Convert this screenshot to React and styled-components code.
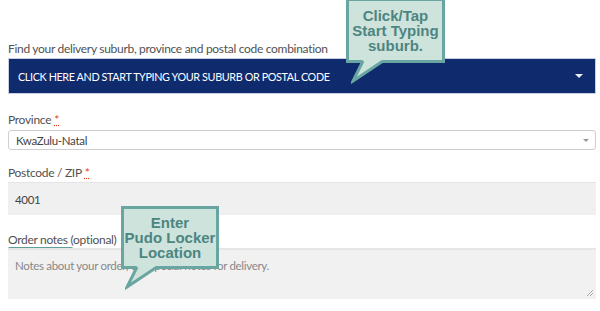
import React from 'react';
import styled, { createGlobalStyle } from 'styled-components';

const Global = createGlobalStyle`
  body {
    margin: 0;
    background: #fff;
    font-family: Lato, "Open Sans", sans-serif;
  }
`;

const Page = styled.div`
  position: relative;
  width: 600px;
  height: 311px;
  overflow: hidden;
  padding: 41px 4px 0 8px;
  box-sizing: border-box;
`;

const Field = styled.div`
  display: flex;
  flex-direction: column;
  margin-bottom: ${(p) => p.gap || 18}px;
`;

const Label = styled.label`
  font-size: 12px;
  letter-spacing: -0.3px;
  color: #515151;
  line-height: 15px;
  margin-bottom: ${(p) => p.mb || 4}px;
  position: relative;
  display: inline-block;
  align-self: flex-start;
`;

const Req = styled.span`
  color: #e2401c;
  text-decoration: underline dotted;
  margin-left: 3px;
`;

const Underline = styled.span`
  position: absolute;
  left: 0;
  bottom: -3px;
  width: 65px;
  height: 3px;
  background: #5e9f9c;
  border-radius: 2px;
`;

const SuburbBar = styled.div`
  height: 34px;
  background: #0f2b6e;
  display: flex;
  align-items: center;
  justify-content: space-between;
  padding: 0 12px 0 9px;
  color: #fff;
  font-size: 10.8px;
  letter-spacing: -0.38px;
  border: 1px solid #c7cfe0;
`;

const Select = styled.div`
  height: 18px;
  border: 1px solid #cfcfcf;
  border-radius: 3px;
  display: flex;
  align-items: center;
  justify-content: space-between;
  padding: 0 6px 0 7px;
  font-size: 11.5px;
  letter-spacing: -0.3px;
  color: #444;
`;

const Caret = styled.span`
  width: 0;
  height: 0;
  border-left: ${(p) => p.s}px solid transparent;
  border-right: ${(p) => p.s}px solid transparent;
  border-top: ${(p) => p.s}px solid ${(p) => p.c};
`;

const Input = styled.div`
  height: 32px;
  background: #f0f0f0;
  border-top: 1px solid #e4e4e4;
  display: flex;
  align-items: center;
  padding-left: 7px;
  font-size: 11.5px;
  letter-spacing: -0.3px;
  color: #444;
`;

const TextArea = styled.div`
  position: relative;
  height: 40px;
  background: #f1f1f1;
  border-top: 2px solid #e6e6e6;
  padding: 9px 7px 0;
  font-size: 11.5px;
  letter-spacing: -0.3px;
  color: #888;
`;

const Grip = styled.svg`
  position: absolute;
  right: 2px;
  bottom: 2px;
`;

const Callout = styled.div`
  position: absolute;
  left: ${(p) => p.x}px;
  top: ${(p) => p.y}px;
  width: ${(p) => p.w}px;
  height: ${(p) => p.h}px;
  box-sizing: border-box;
  background: #cde3dc;
  border: 3px solid #6aa6a1;
  display: flex;
  align-items: center;
  justify-content: center;
  text-align: center;
  font-family: "Liberation Sans", Arial, sans-serif;
  font-weight: bold;
  font-size: 15px;
  line-height: 15px;
  color: #4d8581;
  z-index: 2;
`;

const Tail = styled.svg`
  position: absolute;
  left: ${(p) => p.x}px;
  top: ${(p) => p.y}px;
  z-index: 3;
`;

function Pointer({ x, y }) {
  return (
    <Tail x={x} y={y} width="40" height="24" viewBox="0 0 40 24">
      <polygon points="12,0 2,21 32,0" fill="#cde3dc" />
      <polyline points="12,1 2,21 32,1" fill="none" stroke="#6aa6a1" strokeWidth="3" />
    </Tail>
  );
}

export default function App() {
  return (
    <>
      <Global />
      <Page>
        <Field gap={18}>
          <Label mb={2}>Find your delivery suburb, province and postal code combination</Label>
          <SuburbBar>
            <span>CLICK HERE AND START TYPING YOUR SUBURB OR POSTAL CODE</span>
            <Caret s={4} c="#e8ecf5" />
          </SuburbBar>
        </Field>
        <Field gap={15}>
          <Label mb={3}>Province<Req>*</Req></Label>
          <Select>
            <span>KwaZulu-Natal</span>
            <Caret s={3} c="#999" />
          </Select>
        </Field>
        <Field gap={17}>
          <Label mb={2}>Postcode / ZIP<Req>*</Req></Label>
          <Input>4001</Input>
        </Field>
        <Field>
          <Label mb={1}>Order notes (optional)<Underline /></Label>
          <TextArea>
            Notes about your order, e.g. special notes for delivery.
            <Grip width="8" height="8" viewBox="0 0 8 8">
              <path d="M7 1 L1 7 M7 4 L4 7" stroke="#aaa" strokeWidth="1" />
            </Grip>
          </TextArea>
        </Field>

        <Callout x={346} y={-2} w={99} h={65}>
          Click/Tap<br />Start Typing<br />suburb.
        </Callout>
        <Pointer x={351} y={60} />

        <Callout x={121} y={206} w={98} h={63}>
          Enter<br />Pudo Locker<br />Location
        </Callout>
        <Pointer x={125} y={266} />
      </Page>
    </>
  );
}
